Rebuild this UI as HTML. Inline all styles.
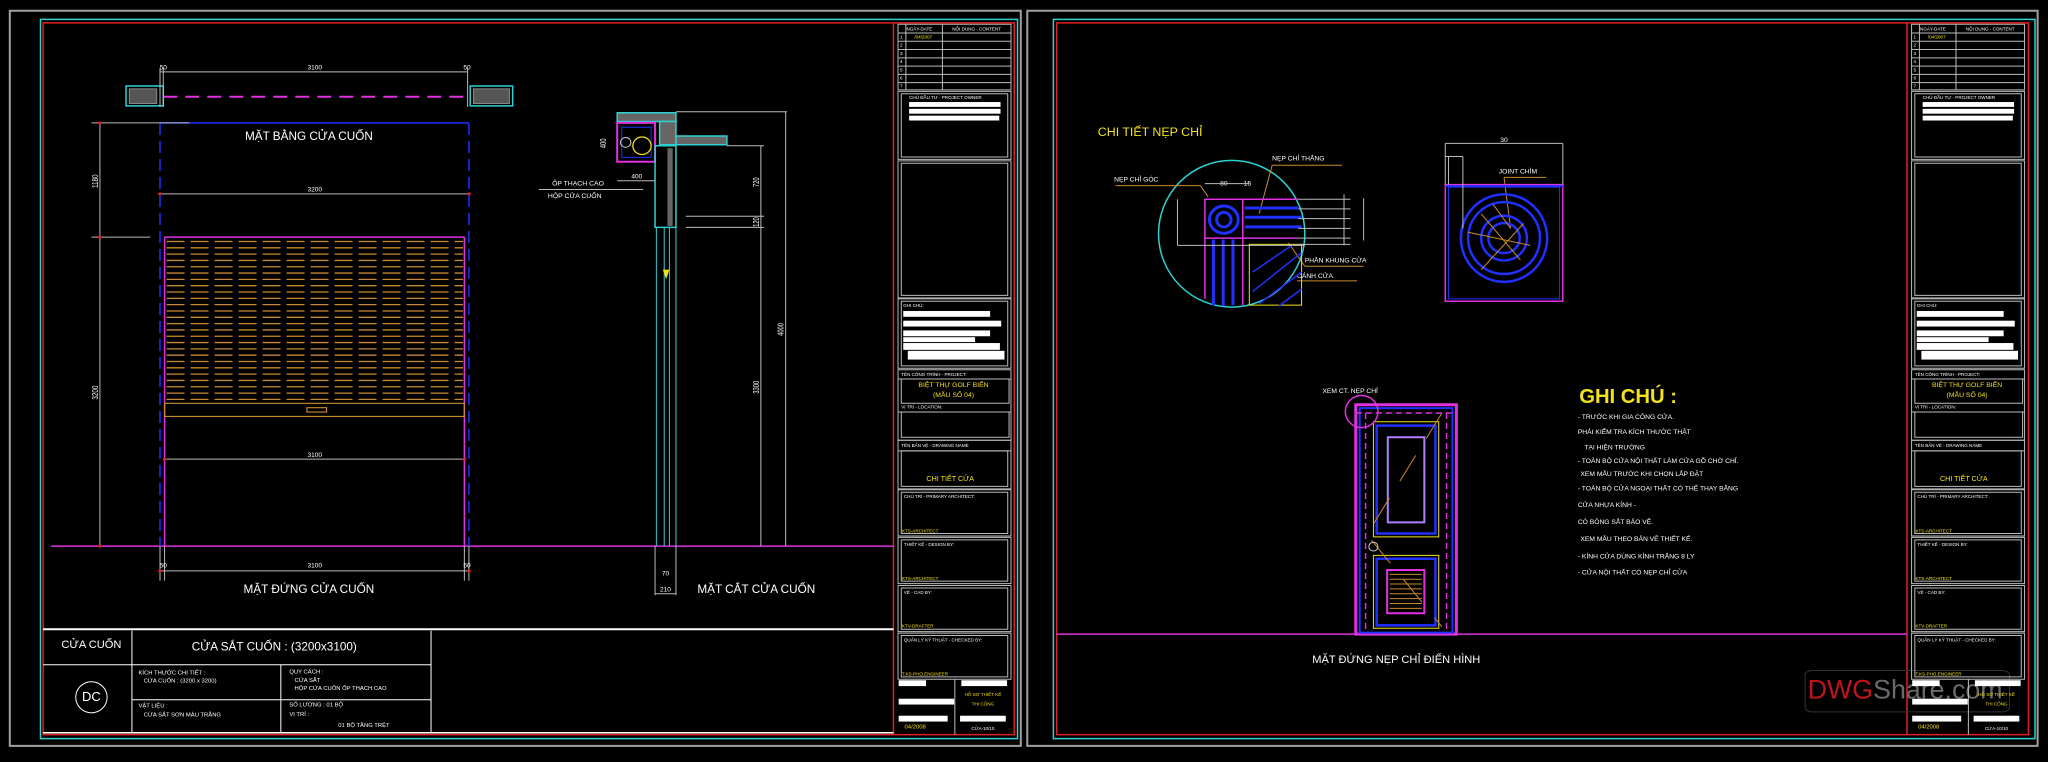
<!DOCTYPE html>
<html><head><meta charset="utf-8">
<style>
html,body{margin:0;padding:0;background:#000;width:2048px;height:762px;overflow:hidden}
svg{display:block}
svg *{vector-effect:non-scaling-stroke}
text{font-family:"Liberation Sans","DejaVu Sans",sans-serif;fill:#fff}
text:not([transform]){transform-box:fill-box;transform-origin:50% 85%;transform:scaleY(1.34)}
.s{font-size:7px}
.y{fill:#f2e21a}
.w{fill:#fff}
</style></head><body>
<svg width="2048" height="762" viewBox="0 0 2048 762" xmlns="http://www.w3.org/2000/svg">
<rect width="2048" height="762" fill="#000"/>

<!-- LEFT PANEL -->
<g transform="scale(0.6531,0.4859)" fill="none">
<rect x="15" y="22" width="1548" height="1513" stroke="#a0a0a0" stroke-width="2"/>
<rect x="62" y="40" width="1496" height="1480" stroke="#2fd0d0" stroke-width="1.5"/>
<rect x="66" y="47" width="1487" height="1465" stroke="#e02020" stroke-width="1.5"/>
<line x1="1368" y1="47" x2="1368" y2="1512" stroke="#e02020" stroke-width="1.5"/>

<!-- bottom table -->
<line x1="66" y1="1295" x2="1368" y2="1295" stroke="#fff" stroke-width="2"/>
<line x1="66" y1="1508" x2="1368" y2="1508" stroke="#fff" stroke-width="1.5"/>
<g stroke="#fff" stroke-width="1">
<line x1="202" y1="1298" x2="202" y2="1508"/><line x1="660" y1="1298" x2="660" y2="1508"/>
<line x1="430" y1="1368" x2="430" y2="1508"/><line x1="66" y1="1368" x2="660" y2="1368"/>
<line x1="202" y1="1440" x2="660" y2="1440"/>
<ellipse cx="140" cy="1435" rx="24" ry="32"/>
</g>
<g stroke="none">
<text x="140" y="1334" font-size="17" text-anchor="middle">CỬA CUỐN</text>
<text x="420" y="1339" font-size="18" text-anchor="middle">CỬA SẮT CUỐN : (3200x3100)</text>
<text x="140" y="1443" font-size="20" text-anchor="middle">DC</text>
<text x="212" y="1389" font-size="9">KÍCH THƯỚC CHI TIẾT :</text>
<text x="220" y="1405" font-size="9">CỬA CUỐN : (3200 x 3200)</text>
<text x="212" y="1456" font-size="9">VẬT LIỆU :</text>
<text x="220" y="1475" font-size="9">CỬA SẮT SƠN MÀU TRẮNG</text>
<text x="443" y="1387" font-size="9">QUY CÁCH :</text>
<text x="451" y="1404" font-size="9">CỬA SẮT</text>
<text x="451" y="1421" font-size="9">HỘP CỬA CUỐN ỐP THẠCH CAO</text>
<text x="443" y="1454" font-size="9">SỐ LƯỢNG :    01 BỘ</text>
<text x="443" y="1474" font-size="9">VỊ TRÍ :</text>
<text x="518" y="1497" font-size="9">01 BỘ TẦNG TRỆT</text>
</g>

<line x1="78" y1="1124" x2="1368" y2="1124" stroke="#e030e0" stroke-width="1.5"/>

<!-- plan -->
<rect x="193" y="177" width="57" height="41" stroke="#2fd0d0" stroke-width="1.5"/>
<rect x="198" y="183" width="42" height="30" fill="#555" stroke="#888"/>
<rect x="720" y="177" width="65" height="41" stroke="#2fd0d0" stroke-width="1.5"/>
<rect x="725" y="183" width="55" height="30" fill="#555" stroke="#888"/>
<line x1="250" y1="199" x2="720" y2="199" stroke="#e030e0" stroke-width="2" stroke-dasharray="14,8"/>
<g stroke="#bbb" stroke-width="1"><line x1="245" y1="148" x2="716" y2="148"/>
<line x1="250" y1="140" x2="250" y2="220"/><line x1="716" y1="140" x2="716" y2="220"/>
<line x1="245" y1="140" x2="245" y2="220"/></g>
<g stroke="none" font-size="10"><text x="482" y="144" text-anchor="middle">3100</text><text x="250" y="144" text-anchor="middle">50</text><text x="715" y="144" text-anchor="middle">50</text></g>

<!-- elevation -->
<g stroke="#2030ff" stroke-width="1.5" stroke-dasharray="12,6">
<line x1="245" y1="253" x2="245" y2="1124"/><line x1="718" y1="253" x2="718" y2="1124"/></g>
<line x1="245" y1="253" x2="718" y2="253" stroke="#2030ff" stroke-width="1.5"/>
<g stroke="#e030e0" stroke-width="1.5"><line x1="252" y1="488" x2="252" y2="1124"/><line x1="711" y1="488" x2="711" y2="1124"/><line x1="252" y1="488" x2="711" y2="488"/></g>
<path stroke="#c88a30" stroke-width="1.3" stroke-dasharray="18,6" d="M255 497H709M255 510H709M255 523H709M255 536H709M255 549H709M255 562H709M255 575H709M255 588H709M255 601H709M255 614H709M255 627H709M255 640H709M255 653H709M255 666H709M255 679H709M255 692H709M255 705H709M255 718H709M255 731H709M255 744H709M255 757H709M255 770H709M255 783H709M255 796H709M255 809H709M255 822H709"/>
<rect x="252" y="830" width="459" height="27" stroke="#c88a30" stroke-width="1.2"/>
<rect x="470" y="839" width="30" height="9" stroke="#c88a30" stroke-width="1.2"/>
<g stroke="#bbb" stroke-width="1">
<line x1="153" y1="253" x2="153" y2="1124"/><line x1="140" y1="253" x2="290" y2="253"/>
<line x1="140" y1="488" x2="230" y2="488"/>
<line x1="245" y1="399" x2="718" y2="399"/><line x1="252" y1="945" x2="711" y2="945"/>
<line x1="245" y1="1175" x2="718" y2="1175"/>
<line x1="245" y1="1124" x2="245" y2="1195"/><line x1="252" y1="1124" x2="252" y2="1195"/>
<line x1="711" y1="1124" x2="711" y2="1195"/><line x1="718" y1="1124" x2="718" y2="1195"/>
</g>
<g fill="#e02020" stroke="none"><circle cx="153" cy="253" r="3"/><circle cx="153" cy="488" r="3"/><circle cx="153" cy="1124" r="3"/><circle cx="245" cy="399" r="3"/><circle cx="718" cy="399" r="3"/><circle cx="252" cy="945" r="3"/><circle cx="711" cy="945" r="3"/><circle cx="245" cy="1175" r="3"/><circle cx="718" cy="1175" r="3"/></g>
<g stroke="none" font-size="10">
<text x="482" y="395" text-anchor="middle">3200</text>
<text x="482" y="941" text-anchor="middle">3100</text>
<text x="482" y="1168" text-anchor="middle">3100</text>
<text x="250" y="1168" text-anchor="middle">50</text><text x="715" y="1168" text-anchor="middle">50</text>
<text transform="translate(150,373) rotate(-90)" font-size="13" text-anchor="middle">1180</text>
<text transform="translate(150,808) rotate(-90)" font-size="13" text-anchor="middle">3200</text>
<text x="473" y="289" font-size="18" text-anchor="middle">MẶT BẰNG  CỬA CUỐN</text>
<text x="473" y="1221" font-size="18" text-anchor="middle">MẶT ĐỨNG  CỬA CUỐN</text>
<text x="1158" y="1221" font-size="18" text-anchor="middle">MẶT CẮT  CỬA CUỐN</text>
</g>

<!-- section -->
<rect x="945" y="232" width="90" height="18" fill="#666" stroke="#2fd0d0" stroke-width="1.5"/>
<rect x="1010" y="250" width="25" height="48" fill="#666" stroke="#2fd0d0" stroke-width="1.5"/>
<rect x="1035" y="280" width="78" height="18" fill="#666" stroke="#2fd0d0" stroke-width="1.5"/>
<rect x="945" y="253" width="58" height="80" stroke="#e030e0" stroke-width="2"/>
<rect x="952" y="262" width="45" height="62" stroke="#2030ff" stroke-width="1"/>
<ellipse cx="983" cy="300" rx="14" ry="18" stroke="#f2e21a" stroke-width="1.3"/>
<ellipse cx="958" cy="293" rx="8" ry="10" stroke="#ccc" stroke-width="1"/>
<rect x="1003" y="300" width="32" height="168" stroke="#2fd0d0" stroke-width="1.5"/>
<rect x="1022" y="305" width="8" height="160" fill="#666" stroke="none"/>
<g stroke="#2fd0d0" stroke-width="1"><line x1="1005" y1="468" x2="1005" y2="1124"/><line x1="1017" y1="468" x2="1017" y2="1124"/><line x1="1025" y1="468" x2="1025" y2="1124"/><line x1="1035" y1="468" x2="1035" y2="1124"/></g>
<g stroke="#bbb" stroke-width="1">
<line x1="1035" y1="230" x2="1205" y2="230"/><line x1="1203" y1="230" x2="1203" y2="1124"/>
<line x1="1113" y1="300" x2="1170" y2="300"/><line x1="1165" y1="300" x2="1165" y2="1124"/>
<line x1="1050" y1="445" x2="1170" y2="445"/><line x1="1050" y1="468" x2="1170" y2="468"/>
<line x1="825" y1="390" x2="985" y2="390"/><line x1="945" y1="372" x2="1003" y2="372"/>
<line x1="1003" y1="1124" x2="1003" y2="1225"/><line x1="1035" y1="1124" x2="1035" y2="1225"/>
<line x1="1003" y1="1222" x2="1035" y2="1222"/>
</g>
<g stroke="none" font-size="10">
<text x="885" y="382" font-size="10.5" text-anchor="middle">ỐP THẠCH CAO</text>
<text x="880" y="408" font-size="10.5" text-anchor="middle">HỘP CỬA CUỐN</text>
<text x="975" y="368" text-anchor="middle">400</text>
<text transform="translate(928,295) rotate(-90)" font-size="12" text-anchor="middle">400</text>
<text transform="translate(1162,375) rotate(-90)" font-size="12" text-anchor="middle">720</text>
<text transform="translate(1162,457) rotate(-90)" font-size="12" text-anchor="middle">120</text>
<text transform="translate(1200,678) rotate(-90)" font-size="12" text-anchor="middle">4000</text>
<text transform="translate(1162,797) rotate(-90)" font-size="12" text-anchor="middle">3300</text>
<text x="1019" y="1185" text-anchor="middle">70</text>
<text x="1019" y="1218" text-anchor="middle">210</text>
</g>
<path d="M1015 555 L1020 575 L1025 555Z" fill="#f2e21a" stroke="none"/>

<!-- title block -->
<g stroke="#bbb" stroke-width="1">
<rect x="1375" y="50" width="173" height="135"/>
<line x1="1387" y1="50" x2="1387" y2="185"/><line x1="1443" y1="50" x2="1443" y2="185"/>
<path d="M1375 68H1548M1375 85H1548M1375 102H1548M1375 119H1548M1375 136H1548M1375 153H1548M1375 170H1548"/>
<rect x="1375" y="188" width="173" height="140"/><rect x="1380" y="193" width="163" height="130"/>
<rect x="1375" y="331" width="173" height="282"/><rect x="1380" y="336" width="163" height="272"/>
<rect x="1375" y="615" width="173" height="143"/><rect x="1380" y="620" width="163" height="133"/>
<rect x="1375" y="761" width="173" height="145"/>
<path d="M1375 780H1548M1380 780V830H1545V780M1375 848H1548M1380 848V900H1545V848"/>
<rect x="1375" y="906" width="173" height="100"/><rect x="1380" y="928" width="163" height="73"/>
<line x1="1375" y1="928" x2="1548" y2="928"/>
<rect x="1375" y="1008" width="173" height="95"/><rect x="1380" y="1013" width="163" height="85"/>
<rect x="1375" y="1106" width="173" height="95"/><rect x="1380" y="1111" width="163" height="85"/>
<rect x="1375" y="1205" width="173" height="95"/><rect x="1380" y="1210" width="163" height="85"/>
<rect x="1375" y="1303" width="173" height="95"/><rect x="1380" y="1308" width="163" height="85"/>
<line x1="1462" y1="1398" x2="1462" y2="1512"/>
</g>
<g stroke="none">
<rect x="1392" y="210" width="140" height="10" fill="#fff"/><rect x="1392" y="224" width="140" height="10" fill="#fff"/><rect x="1392" y="238" width="138" height="10" fill="#fff"/>
<rect x="1383" y="640" width="133" height="12" fill="#fff"/><rect x="1383" y="660" width="150" height="12" fill="#fff"/><rect x="1383" y="680" width="133" height="12" fill="#fff"/><rect x="1383" y="694" width="110" height="10" fill="#fff"/><rect x="1383" y="706" width="148" height="14" fill="#fff"/><rect x="1390" y="722" width="148" height="18" fill="#fff"/>
<rect x="1376" y="1400" width="42" height="12" fill="#fff"/><rect x="1472" y="1400" width="70" height="12" fill="#fff"/><rect x="1376" y="1438" width="85" height="12" fill="#fff"/><rect x="1376" y="1473" width="75" height="12" fill="#fff"/><rect x="1470" y="1473" width="70" height="12" fill="#fff"/>
<text x="1388" y="63" class="s">NGÀY-DATE</text><text x="1458" y="63" class="s">NỘI DUNG - CONTENT</text>
<text x="1400" y="79" class="s y">/04/2007</text>
<text x="1378" y="79" class="s">1</text><text x="1378" y="96" class="s">2</text><text x="1378" y="113" class="s">3</text><text x="1378" y="130" class="s">4</text><text x="1378" y="147" class="s">5</text><text x="1378" y="164" class="s">6</text><text x="1378" y="180" class="s">7</text>
<text x="1392" y="204" class="s">CHỦ ĐẦU TƯ - PROJECT OWNER</text>
<text x="1383" y="632" class="s">GHI CHÚ:</text>
<text x="1380" y="774" class="s">TÊN CÔNG TRÌNH - PROJECT:</text>
<text x="1460" y="797" font-size="10.5" class="y" text-anchor="middle">BIỆT THỰ GOLF BIỂN</text>
<text x="1460" y="817" font-size="10.5" class="y" text-anchor="middle">(MẪU SỐ 04)</text>
<text x="1380" y="841" class="s">VỊ TRÍ - LOCATION:</text>
<text x="1380" y="920" class="s">TÊN BẢN VẼ - DRAWING NAME</text>
<text x="1455" y="990" font-size="11" class="y" text-anchor="middle">CHI TIẾT CỬA</text>
<text x="1384" y="1025" class="s">CHỦ TRÌ - PRIMARY ARCHITECT:</text>
<text x="1381" y="1096" class="s y">KTS-ARCHITECT</text>
<text x="1384" y="1124" class="s">THIẾT KẾ - DESIGN BY:</text>
<text x="1381" y="1194" class="s y">KTS-ARCHITECT</text>
<text x="1384" y="1223" class="s">VẼ - CAD BY:</text>
<text x="1381" y="1292" class="s y">KTV-DRAFTER</text>
<text x="1384" y="1320" class="s">QUẢN LÝ KỸ THUẬT - CHECKED BY:</text>
<text x="1381" y="1390" class="s y">T.KS-PHO.ENGINEER</text>
<text x="1505" y="1432" class="s y" text-anchor="middle">HỒ SƠ THIẾT KẾ</text>
<text x="1505" y="1452" class="s y" text-anchor="middle">THI CÔNG</text>
<text x="1385" y="1500" font-size="9" class="y">04/2008</text>
<text x="1505" y="1502" class="s" text-anchor="middle">CỬA-10/10</text>
</g>
</g>

<!-- RIGHT PANEL -->
<g transform="translate(1024,0) scale(0.6531,0.4859)" fill="none">
<rect x="5" y="22" width="1547" height="1513" stroke="#a0a0a0" stroke-width="2"/>
<rect x="45" y="40" width="1503" height="1480" stroke="#2fd0d0" stroke-width="1.5"/>
<rect x="50" y="47" width="1488" height="1465" stroke="#e02020" stroke-width="1.5"/>
<line x1="1352" y1="47" x2="1352" y2="1512" stroke="#e02020" stroke-width="1.5"/>
<line x1="50" y1="1305" x2="1352" y2="1305" stroke="#e030e0" stroke-width="1.5"/>

<g stroke="none">
<text x="113" y="280" font-size="19" class="y">CHI TIẾT NẸP CHỈ</text>
<text x="925" y="830" font-size="31" font-weight="bold" class="y" text-anchor="middle">GHI CHÚ :</text>
<text x="570" y="1365" font-size="17" text-anchor="middle">MẶT ĐỨNG NẸP CHỈ ĐIỂN HÌNH</text>
<g font-size="10.3">
<text x="848" y="863">- TRƯỚC KHI GIA CÔNG CỬA.</text>
<text x="848" y="894">PHẢI KIỂM TRA KÍCH THƯỚC THẬT</text>
<text x="858" y="925">TẠI HIỆN TRƯỜNG</text>
<text x="848" y="953">- TOÀN BỘ CỬA NỘI THẤT LÀM CỬA GỖ CHỜ CHỈ.</text>
<text x="852" y="980">XEM MẪU TRƯỚC KHI CHỌN LẮP ĐẶT</text>
<text x="848" y="1010">- TOÀN BỘ CỬA NGOẠI THẤT CÓ THỂ THAY BẰNG</text>
<text x="848" y="1044">CỬA NHỰA KÍNH -</text>
<text x="848" y="1079">CÓ BÔNG SẮT BẢO VỆ.</text>
<text x="852" y="1114">XEM MẪU THEO BẢN VẼ THIẾT KẾ.</text>
<text x="848" y="1150">- KÍNH CỬA DÙNG KÍNH TRẮNG 8 LY</text>
<text x="848" y="1183">- CỬA NỘI THẤT CÓ NẸP CHỈ CỬA</text>
<text x="457" y="809">XEM CT. NẸP CHỈ</text>
<text x="138" y="374">NẸP CHỈ GÓC</text>
<text x="380" y="331">NẸP CHỈ THẲNG</text>
<text x="430" y="541">PHẦN KHUNG CỬA</text>
<text x="418" y="572">CÁNH CỬA</text>
<text x="727" y="357">JOINT CHÌM</text>
<text x="735" y="293" text-anchor="middle">30</text>
<text x="306" y="382" text-anchor="middle">80</text>
<text x="342" y="382" text-anchor="middle">15</text>
</g>
</g>

<!-- nep chi detail -->
<ellipse cx="318" cy="481" rx="112" ry="151" stroke="#2fd0d0" stroke-width="1.5"/>
<g stroke="#c88a30" stroke-width="1"><path d="M140 382H270L282 405"/><path d="M380 340H487M380 340L360 440"/><path d="M430 548H520M405 500L430 548"/><path d="M418 578H510"/><path d="M735 365H800M735 365L745 470"/></g>
<rect x="277" y="410" width="58" height="80" stroke="#e030e0" stroke-width="1.5"/>
<line x1="335" y1="410" x2="420" y2="410" stroke="#e030e0" stroke-width="1.5"/>
<line x1="335" y1="490" x2="420" y2="490" stroke="#e030e0" stroke-width="1.5"/>
<line x1="335" y1="410" x2="335" y2="628" stroke="#e030e0" stroke-width="1.5"/>
<line x1="277" y1="490" x2="277" y2="615" stroke="#e030e0" stroke-width="1.5"/>
<ellipse cx="306" cy="452" rx="22" ry="28" stroke="#2030ff" stroke-width="3"/>
<ellipse cx="306" cy="452" rx="11" ry="15" stroke="#2030ff" stroke-width="3"/>
<g stroke="#2030ff" stroke-width="3"><path d="M338 428H420M338 447H425M338 467H425"/><path d="M290 493V628M305 493V630M320 493V628"/></g>
<rect x="345" y="503" width="80" height="125" stroke="#f2e21a" stroke-width="1"/>
<g stroke="#2030ff" stroke-width="1.5"><path d="M350 560L410 505M350 600L425 520M360 625L425 560M390 630L425 595"/></g>
<g stroke="#bbb" stroke-width="1"><path d="M277 378H335M335 378H345M235 410V505M420 410H500M420 430H500M420 450H500M420 470H500M420 490H500M420 503H500M490 400V505M520 408V495M235 505H430"/></g>

<!-- square detail -->
<rect x="645" y="380" width="180" height="240" stroke="#e030e0" stroke-width="1.5"/>
<rect x="650" y="385" width="170" height="230" stroke="#2030ff" stroke-width="1"/>
<line x1="645" y1="383" x2="825" y2="383" stroke="#2030ff" stroke-width="2"/>
<g stroke="#2030ff" stroke-width="2.5"><ellipse cx="735" cy="490" rx="66" ry="90"/><ellipse cx="735" cy="490" rx="55" ry="74"/><ellipse cx="735" cy="490" rx="35" ry="46"/><ellipse cx="735" cy="490" rx="24" ry="31"/></g>
<g stroke="#c88a30" stroke-width="1"><path d="M680 478L775 505M700 440L760 535M718 420L745 470M700 555L765 460"/></g>
<g stroke="#bbb" stroke-width="1"><path d="M645 295H825M645 295V380M825 295V380M645 322H672M650 322V380M672 322V470"/></g>

<!-- door -->
<rect x="508" y="833" width="154" height="472" stroke="#e030e0" stroke-width="3"/>
<rect x="514" y="840" width="142" height="462" stroke="#2030ff" stroke-width="2"/>
<path d="M523 850V1300M647 850V1300M508 850H662" stroke="#e030e0" stroke-width="1.5" stroke-dasharray="6,4"/>
<rect x="535" y="868" width="100" height="237" stroke="#f2e21a" stroke-width="1"/>
<rect x="540" y="876" width="90" height="222" stroke="#2030ff" stroke-width="2.5"/>
<rect x="557" y="900" width="56" height="175" stroke="#b080ff" stroke-width="2"/>
<rect x="535" y="1143" width="100" height="150" stroke="#f2e21a" stroke-width="1"/>
<rect x="540" y="1150" width="90" height="137" stroke="#2030ff" stroke-width="2.5"/>
<rect x="556" y="1173" width="57" height="89" stroke="#e030e0" stroke-width="2"/>
<path stroke="#c88a30" stroke-width="1" d="M560 1182H609M560 1192H609M560 1202H609M560 1212H609M560 1222H609M560 1232H609M560 1242H609M560 1252H609"/>
<path d="M640 850L525 1100L640 1290" stroke="#c88a30" stroke-width="1" stroke-dasharray="30,20"/>
<ellipse cx="517" cy="847" rx="25" ry="33" stroke="#e030e0" stroke-width="1.5"/>
<ellipse cx="535" cy="1125" rx="7" ry="9" stroke="#ccc" stroke-width="1"/>

<!-- watermark -->
<rect x="1196" y="1380" width="313" height="85" rx="10" stroke="#333" stroke-width="1"/>
<g stroke="none"><text x="1200" y="1438" font-size="41"><tspan fill="#c0141c">DWG</tspan><tspan fill="#6a6a6a">Share.com</tspan></text></g>

<!-- title block (shifted) -->
<g transform="translate(-16,0)">
<g stroke="#bbb" stroke-width="1">
<rect x="1375" y="50" width="173" height="135"/>
<line x1="1387" y1="50" x2="1387" y2="185"/><line x1="1443" y1="50" x2="1443" y2="185"/>
<path d="M1375 68H1548M1375 85H1548M1375 102H1548M1375 119H1548M1375 136H1548M1375 153H1548M1375 170H1548"/>
<rect x="1375" y="188" width="173" height="140"/><rect x="1380" y="193" width="163" height="130"/>
<rect x="1375" y="331" width="173" height="282"/><rect x="1380" y="336" width="163" height="272"/>
<rect x="1375" y="615" width="173" height="143"/><rect x="1380" y="620" width="163" height="133"/>
<rect x="1375" y="761" width="173" height="145"/>
<path d="M1375 780H1548M1380 780V830H1545V780M1375 848H1548M1380 848V900H1545V848"/>
<rect x="1375" y="906" width="173" height="100"/><rect x="1380" y="928" width="163" height="73"/>
<line x1="1375" y1="928" x2="1548" y2="928"/>
<rect x="1375" y="1008" width="173" height="95"/><rect x="1380" y="1013" width="163" height="85"/>
<rect x="1375" y="1106" width="173" height="95"/><rect x="1380" y="1111" width="163" height="85"/>
<rect x="1375" y="1205" width="173" height="95"/><rect x="1380" y="1210" width="163" height="85"/>
<rect x="1375" y="1303" width="173" height="95"/><rect x="1380" y="1308" width="163" height="85"/>
<line x1="1462" y1="1398" x2="1462" y2="1512"/>
</g>
<g stroke="none">
<rect x="1392" y="210" width="140" height="10" fill="#fff"/><rect x="1392" y="224" width="140" height="10" fill="#fff"/><rect x="1392" y="238" width="138" height="10" fill="#fff"/>
<rect x="1383" y="640" width="133" height="12" fill="#fff"/><rect x="1383" y="660" width="150" height="12" fill="#fff"/><rect x="1383" y="680" width="133" height="12" fill="#fff"/><rect x="1383" y="694" width="110" height="10" fill="#fff"/><rect x="1383" y="706" width="148" height="14" fill="#fff"/><rect x="1390" y="722" width="148" height="18" fill="#fff"/>
<rect x="1376" y="1400" width="42" height="12" fill="#fff"/><rect x="1472" y="1400" width="70" height="12" fill="#fff"/><rect x="1376" y="1438" width="85" height="12" fill="#fff"/><rect x="1376" y="1473" width="75" height="12" fill="#fff"/><rect x="1470" y="1473" width="70" height="12" fill="#fff"/>
<text x="1388" y="63" class="s">NGÀY-DATE</text><text x="1458" y="63" class="s">NỘI DUNG - CONTENT</text>
<text x="1400" y="79" class="s y">/04/2007</text>
<text x="1378" y="79" class="s">1</text><text x="1378" y="96" class="s">2</text><text x="1378" y="113" class="s">3</text><text x="1378" y="130" class="s">4</text><text x="1378" y="147" class="s">5</text><text x="1378" y="164" class="s">6</text><text x="1378" y="180" class="s">7</text>
<text x="1392" y="204" class="s">CHỦ ĐẦU TƯ - PROJECT OWNER</text>
<text x="1383" y="632" class="s">GHI CHÚ:</text>
<text x="1380" y="774" class="s">TÊN CÔNG TRÌNH - PROJECT:</text>
<text x="1460" y="797" font-size="10.5" class="y" text-anchor="middle">BIỆT THỰ GOLF BIỂN</text>
<text x="1460" y="817" font-size="10.5" class="y" text-anchor="middle">(MẪU SỐ 04)</text>
<text x="1380" y="841" class="s">VỊ TRÍ - LOCATION:</text>
<text x="1380" y="920" class="s">TÊN BẢN VẼ - DRAWING NAME</text>
<text x="1455" y="990" font-size="11" class="y" text-anchor="middle">CHI TIẾT CỬA</text>
<text x="1384" y="1025" class="s">CHỦ TRÌ - PRIMARY ARCHITECT:</text>
<text x="1381" y="1096" class="s y">KTS-ARCHITECT</text>
<text x="1384" y="1124" class="s">THIẾT KẾ - DESIGN BY:</text>
<text x="1381" y="1194" class="s y">KTS-ARCHITECT</text>
<text x="1384" y="1223" class="s">VẼ - CAD BY:</text>
<text x="1381" y="1292" class="s y">KTV-DRAFTER</text>
<text x="1384" y="1320" class="s">QUẢN LÝ KỸ THUẬT - CHECKED BY:</text>
<text x="1381" y="1390" class="s y">T.KS-PHO.ENGINEER</text>
<text x="1505" y="1432" class="s y" text-anchor="middle">HỒ SƠ THIẾT KẾ</text>
<text x="1505" y="1452" class="s y" text-anchor="middle">THI CÔNG</text>
<text x="1385" y="1500" font-size="9" class="y">04/2008</text>
<text x="1505" y="1502" class="s" text-anchor="middle">CỬA-10/10</text>
</g>
</g>
</g>
</svg>
</body></html>
